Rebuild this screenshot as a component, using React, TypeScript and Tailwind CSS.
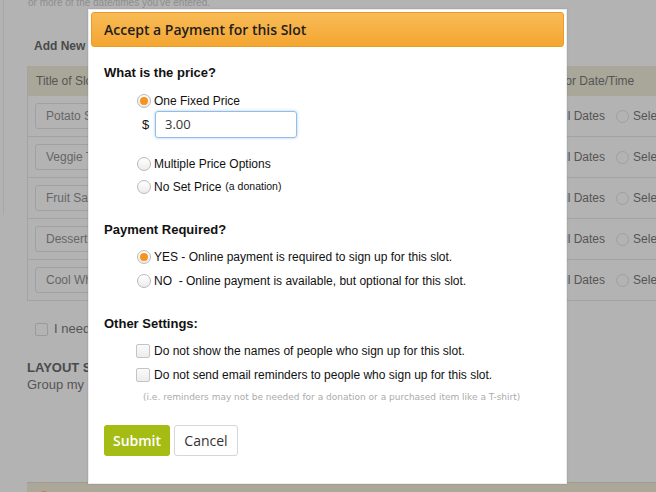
import React from "react";

const Radio = ({ checked }: { checked?: boolean }) => (
  <span className="w-[14px] h-[14px] rounded-full border border-[#b9b9b9] bg-gradient-to-b from-white to-[#ececec] flex items-center justify-center shrink-0">
    {checked && <span className="w-[8px] h-[8px] rounded-full bg-[#f7941d]" />}
  </span>
);

const Check = () => (
  <span className="w-[14px] h-[14px] rounded-[2px] border border-[#c4c4c4] bg-gradient-to-b from-[#fafafa] to-[#ececec] shrink-0" />
);

const rows = ["Potato Salad", "Veggie Tray", "Fruit Salad", "Dessert", "Cool Whip"];

export default function App() {
  return (
    <div className="w-[656px] h-[492px] overflow-hidden relative bg-[#b3b3b3] font-['Liberation_Sans',Arial,sans-serif]">
      <div className="absolute left-[3px] top-0 h-[215px] border-l border-[#a7a7a7]" />
      <div className="pl-[27px]">
        <p className="-mt-[4px] h-[14px] leading-[14px] text-[10px] text-[#8e8e8e] pl-[1px]">or more of the date/times you&apos;ve entered.</p>
        <div className="mt-[28px] ml-[7px] h-[16px] leading-[16px] text-[12px] font-bold text-[#4a4a4a]">Add New Slots</div>
        <div className="mt-[12px] w-[700px] border-l border-[#a3a3a3]">
          <div className="h-[30px] bg-[#a9a799] flex items-center text-[12px] text-[#555]">
            <span className="w-[510px] pl-[8px]">Title of Slot</span>
            <span>Slot for Date/Time</span>
          </div>
          {rows.map((r) => (
            <div key={r} className="h-[41px] border-b border-[#a3a3a3] flex items-center text-[12px] text-[#555]">
              <div className="w-[529px] pl-[7px]">
                <div className="w-[300px] h-[26px] border border-[#a0a0a0] rounded-[3px] pl-[10px] flex items-center text-[#666] text-[12px]">{r}</div>
              </div>
              <span>All Dates</span>
              <span className="ml-[11px] mr-[4px] w-[13px] h-[13px] rounded-full border border-[#a0a0a0]" />
              <span>Select</span>
            </div>
          ))}
        </div>
        <div className="mt-[20px] ml-[8px] h-[16px] flex items-center gap-[6px] text-[13px] text-[#555]">
          <span className="w-[13px] h-[13px] border border-[#9a9a9a] rounded-[2px]" />
          <span>I need more slots</span>
        </div>
        <div className="mt-[23px] text-[13px] font-bold text-[#4a4a4a] leading-[16px]">LAYOUT SETTINGS</div>
        <div className="mt-[1px] text-[13px] text-[#555] leading-[16px]">Group my slots</div>
        <div className="mt-[89px] h-[20px] bg-[#aba899] border-t border-[#a09d8f] pl-[11px] pt-[8px]">
          <span className="block w-[12px] h-[12px] rounded-full bg-[#c87f3a]" />
        </div>
      </div>

      <div className="absolute left-[88px] top-[9px] w-[479px] h-[475px] bg-white shadow-[0_0_2px_rgba(0,0,0,0.15)] border border-[#ececec]">
        <div className="mx-[2px] mt-[2px] h-[35px] rounded-[3px] bg-gradient-to-b from-[#f8bb55] to-[#f4a630] border border-[#eb9c26] flex items-center pl-[12px]">
          <span className="font-['Open_Sans',sans-serif] font-semibold text-[14px] text-[#1e1e1e]">Accept a Payment for this Slot</span>
        </div>
        <div className="pl-[15px] text-[12px] text-[#111]">
          <div className="mt-[16px] h-[20px] flex items-center font-bold text-[13px]">What is the price?</div>
          <div className="mt-[8px] h-[20px] pl-[33px] flex items-center gap-[3px]"><Radio checked /><span>One Fixed Price</span></div>
          <div className="h-[27px] pl-[38px] flex items-center gap-[3px]">
            <span className="text-[13px] w-[10px]">$</span>
            <div className="w-[142px] h-[27px] border border-[#92bde9] rounded-[3px] shadow-[0_0_3px_rgba(100,160,230,0.6)] flex items-center pl-[9px] font-['Open_Sans',sans-serif] text-[13px] text-[#333]">3.00</div>
          </div>
          <div className="mt-[16px] h-[20px] pl-[33px] flex items-center gap-[3px]"><Radio /><span>Multiple Price Options</span></div>
          <div className="mt-[3px] h-[20px] pl-[33px] flex items-center gap-[3px]"><Radio /><span>No Set Price</span><span className="text-[10.5px] ml-[1px]">(a donation)</span></div>
          <div className="mt-[23px] h-[20px] flex items-center font-bold text-[13px]">Payment Required?</div>
          <div className="mt-[7px] h-[20px] pl-[33px] flex items-center gap-[3px]"><Radio checked /><span>YES - Online payment is required to sign up for this slot.</span></div>
          <div className="mt-[4px] h-[20px] pl-[33px] flex items-center gap-[3px]"><Radio /><span className="whitespace-pre">NO  - Online payment is available, but optional for this slot.</span></div>
          <div className="mt-[23px] h-[20px] flex items-center font-bold text-[13px]">Other Settings:</div>
          <div className="mt-[7px] h-[20px] pl-[32px] flex items-center gap-[4px]"><Check /><span>Do not show the names of people who sign up for this slot.</span></div>
          <div className="mt-[4px] h-[20px] pl-[32px] flex items-center gap-[4px]"><Check /><span>Do not send email reminders to people who sign up for this slot.</span></div>
          <div className="mt-[6px] h-[14px] pl-[39px] flex items-center font-['DejaVu_Sans',sans-serif] text-[9px] text-[#ababab]">(i.e. reminders may not be needed for a donation or a purchased item like a T-shirt)</div>
          <div className="mt-[20px] flex gap-[4px]">
            <button className="h-[31px] w-[66px] rounded-[3px] bg-[#a5bc15] text-white font-['Open_Sans',sans-serif] text-[14px] font-semibold">Submit</button>
            <button className="h-[31px] w-[64px] rounded-[3px] bg-white border border-[#d6d6d6] text-[#333] font-['Open_Sans',sans-serif] text-[14px]">Cancel</button>
          </div>
        </div>
      </div>
    </div>
  );
}
